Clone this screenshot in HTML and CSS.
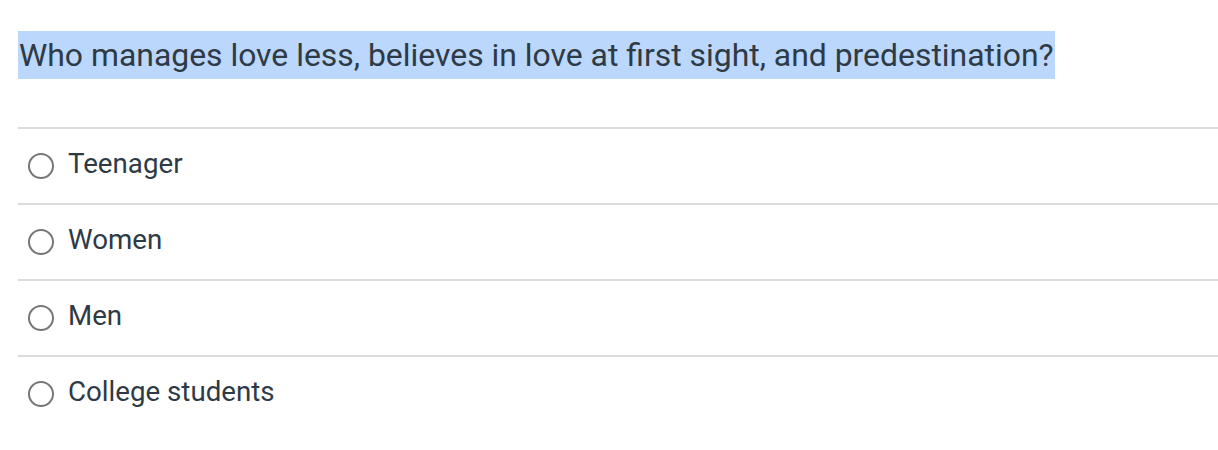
FILE: index.html
```html
<!DOCTYPE html>
<html>
<head>
<meta charset="utf-8">
<link rel="stylesheet" href="styles.css">
</head>
<body>
<div class="quiz">
  <div class="question"><span class="q-text">Who manages love less, believes in love at first sight, and predestination?</span></div>
  <ul class="options">
    <li class="option"><span class="radio"></span><span class="label">Teenager</span></li>
    <li class="option"><span class="radio"></span><span class="label">Women</span></li>
    <li class="option"><span class="radio"></span><span class="label">Men</span></li>
    <li class="option"><span class="radio"></span><span class="label">College students</span></li>
  </ul>
</div>
</body>
</html>
```
FILE: styles.css
```css
html, body {
  margin: 0;
  padding: 0;
  background: #ffffff;
}
body {
  font-family: Roboto, "Liberation Sans", sans-serif;
  color: #2e3a45;
}
.quiz {
  padding: 31px 0 0 18px;
}
.question {
  margin: 0 0 48px 0;
  height: 48px;
}
.q-text {
  display: inline-block;
  background: #bbd7fb;
  font-size: 31.9px;
  line-height: 48px;
  padding: 0 1px;
}
.options {
  list-style: none;
  margin: 0;
  padding: 0;
}
.option {
  display: flex;
  align-items: center;
  height: 74px;
  border-top: 2px solid #dcdcdc;
  gap: 14px;
  padding-left: 10px;
}
.radio {
  width: 22px;
  height: 22px;
  border: 2px solid #777777;
  border-radius: 50%;
  box-sizing: content-box;
  flex: none;
}
.label {
  font-size: 27.7px;
  line-height: 32px;
  position: relative;
  top: -2px;
}
```
